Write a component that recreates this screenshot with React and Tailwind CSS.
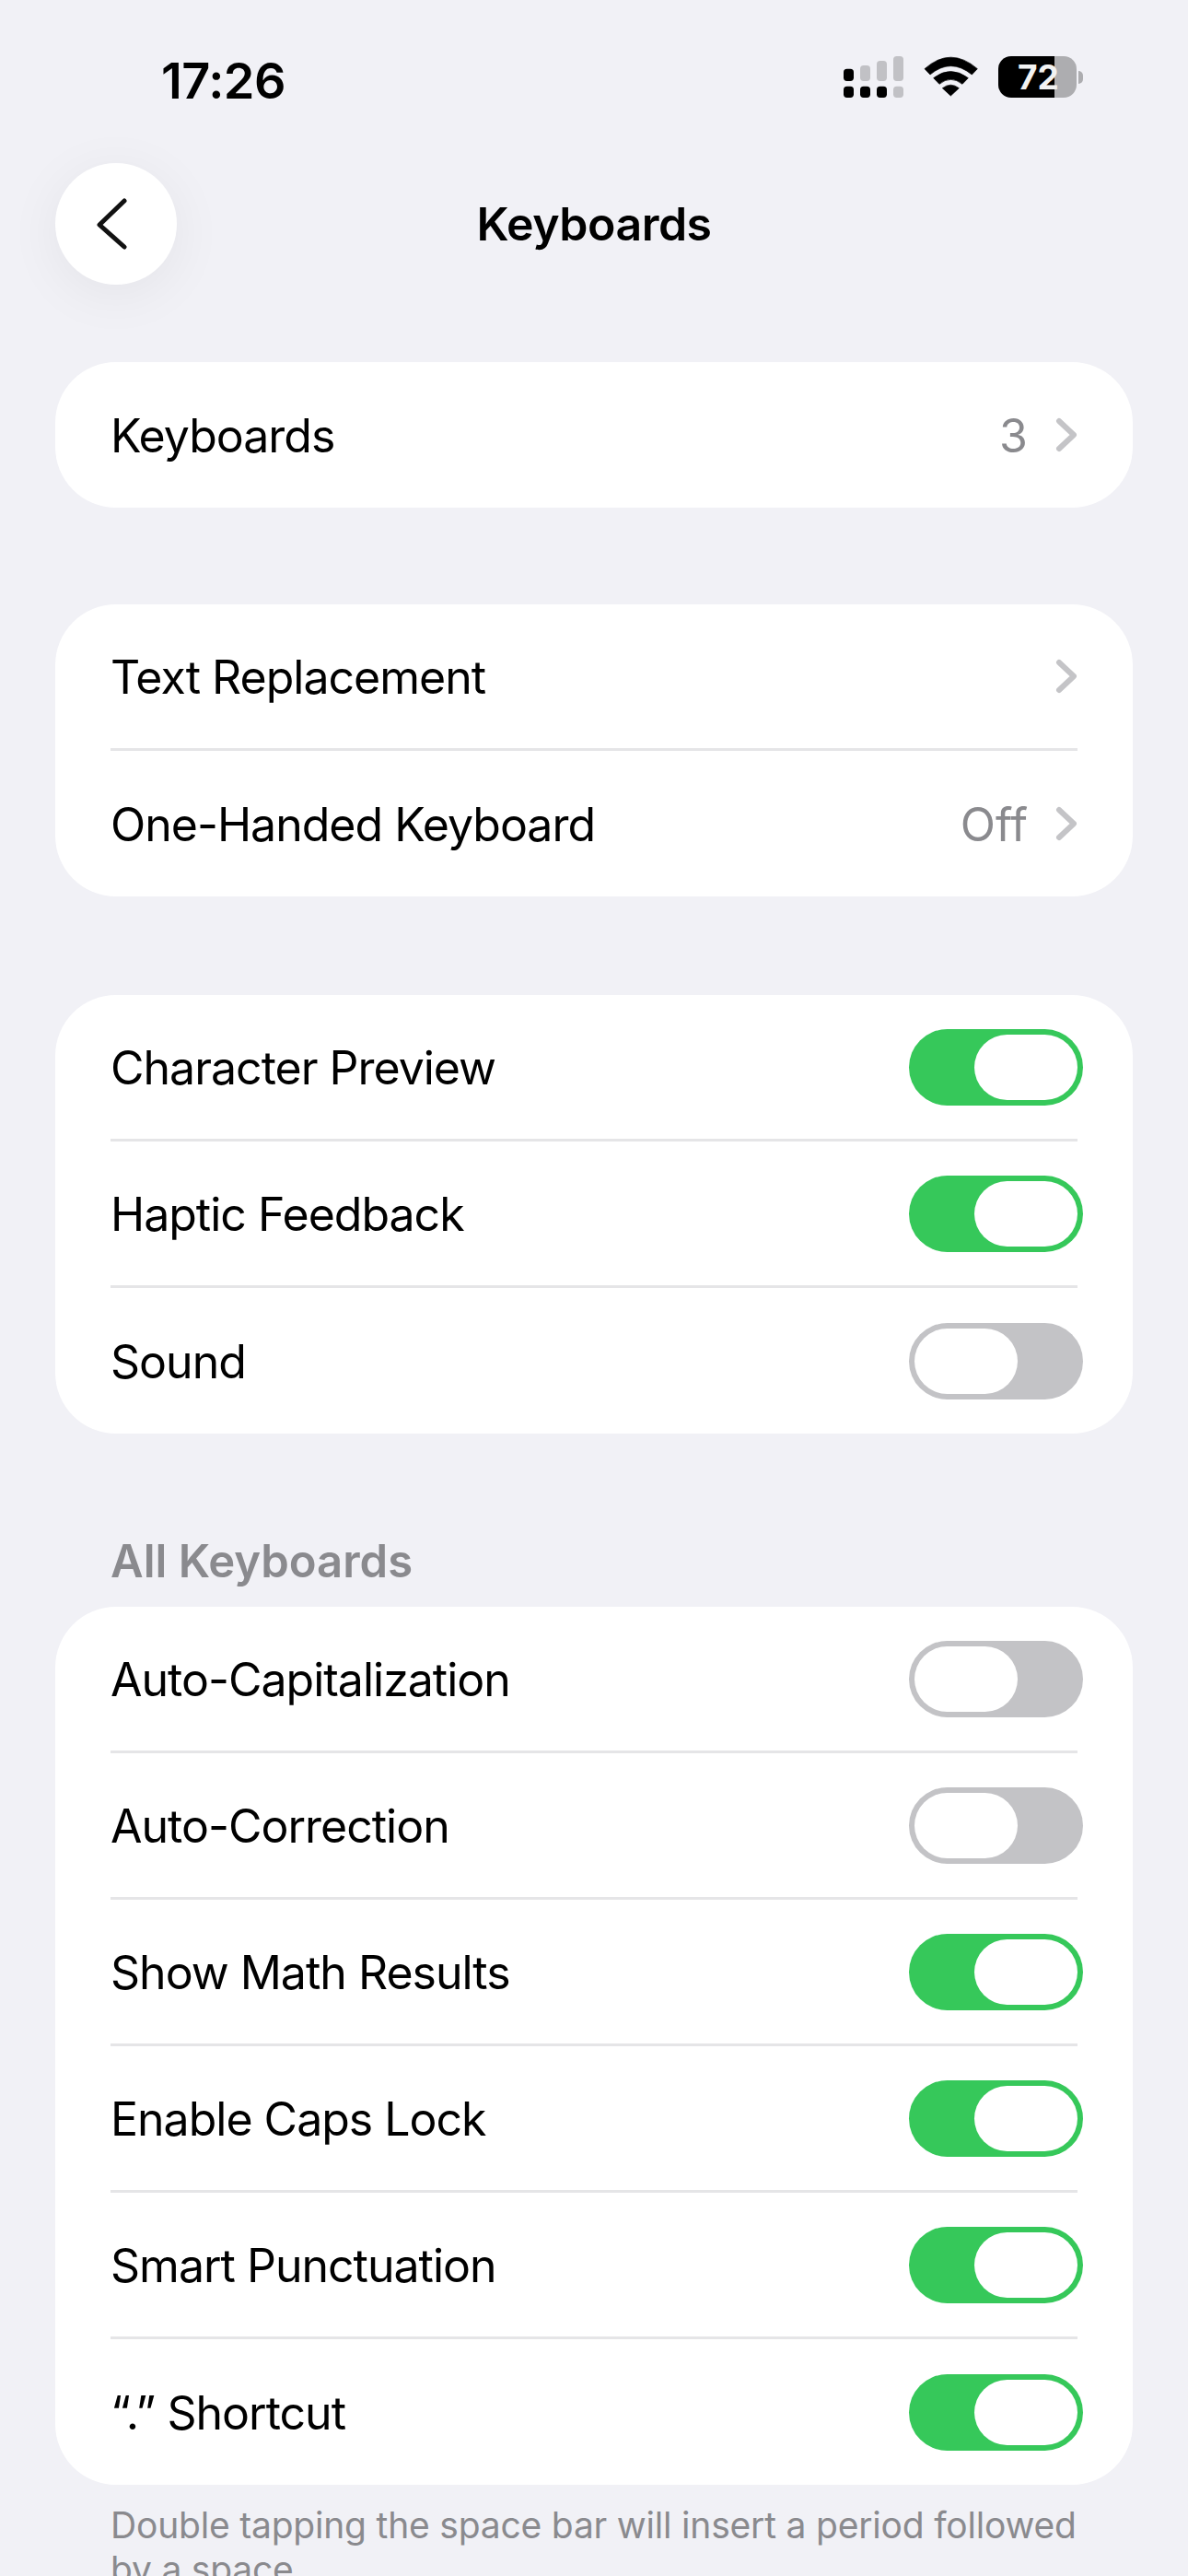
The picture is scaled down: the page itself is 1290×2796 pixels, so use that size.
import React from 'react';

const StatusIcons = () => (
  <svg viewBox="0 0 1020 300" width="340" height="100" className="block">
    {/* signal */}
    <rect x="168" y="113" width="33" height="40" rx="11" fill="#000" />
    <rect x="222" y="102" width="33" height="51" rx="11" fill="#c1c1c5" />
    <rect x="276" y="87" width="33" height="66" rx="11" fill="#c1c1c5" />
    <rect x="330" y="72" width="33" height="81" rx="11" fill="#c1c1c5" />
    <rect x="168" y="170" width="33" height="37" rx="11" fill="#000" />
    <rect x="222" y="170" width="33" height="37" rx="11" fill="#000" />
    <rect x="276" y="170" width="33" height="37" rx="11" fill="#000" />
    <rect x="330" y="170" width="33" height="37" rx="11" fill="#c1c1c5" />
    {/* wifi */}
    <path d="M432 113 Q517 38 604 113 L586 132 Q517 76 450 132 Z" fill="#000" stroke="#000" strokeWidth="2" strokeLinejoin="round" />
    <path d="M461 143 Q517 100 574 143 L555 163 Q517 133 480 163 Z" fill="#000" stroke="#000" strokeWidth="2" strokeLinejoin="round" />
    <path d="M490 176 Q517 155 544 176 L517 201 Z" fill="#000" stroke="#000" strokeWidth="2" strokeLinejoin="round" />
  </svg>
);

const Chevron = () => (
  <svg viewBox="0 0 24 38" width="24" height="38" className="block shrink-0">
    <path d="M4 4 L20 19 L4 34" fill="none" stroke="#c4c4c7" strokeWidth="6" strokeLinecap="round" strokeLinejoin="round" />
  </svg>
);

const Toggle = ({ on }) => (
  <div className={`-mr-[6px] flex h-[83px] w-[189px] shrink-0 items-center rounded-full px-[6px] ${on ? 'justify-end bg-[#36c85a]' : 'justify-start bg-[#c3c3c6]'}`}>
    <div className="h-[71px] w-[112px] rounded-full bg-white" />
  </div>
);

const Row = ({ label, value, chevron, toggle, last }) => (
  <div className={`flex items-center justify-between ${last ? 'h-[158px]' : 'h-[159px] border-b-[3px] border-[#e5e5e7]'}`}>
    <span className="pt-[2px] text-[50px] tracking-[-1px] text-black">{label}</span>
    <div className="flex items-center">
      {value && <span className="mr-[30px] pt-[2px] text-[50px] text-[#8a8a8e]">{value}</span>}
      {chevron && <Chevron />}
      {toggle !== undefined && <Toggle on={toggle} />}
    </div>
  </div>
);

const Card = ({ rows, className = '' }) => (
  <div className={`mx-[60px] rounded-[66px] bg-white px-[60px] ${className}`}>
    {rows.map((row, i) => (
      <Row key={row.label} {...row} last={i === rows.length - 1} />
    ))}
  </div>
);

export default function App() {
  return (
    <div className="h-[2796px] w-[1290px] overflow-hidden bg-[#f1f1f6] font-['Inter',sans-serif]">
      {/* status bar */}
      <div className="flex h-[177px] items-center justify-between pb-[3px] pl-[175px] pr-[90px]">
        <span className="text-[54px] font-semibold tracking-[-0.5px] text-black">17:26</span>
        <div className="relative flex items-center">
          <StatusIcons />
          <div className="absolute left-[224px] top-[24px] flex items-center">
            <div className="flex h-[45px] w-[85px] items-center justify-center rounded-[14px] bg-[linear-gradient(90deg,#000_71.5%,#adadb0_71.5%)] pl-[2px] text-[37px] font-bold leading-none text-[#f2f2f2]">
              72
            </div>
            <div className="ml-[2px] h-[14px] w-[5px] rounded-r-full bg-[#adadb0]" />
          </div>
        </div>
      </div>

      {/* nav */}
      <div className="mb-[84px] grid h-[132px] grid-cols-[132px_1fr_132px] items-center px-[60px]">
        <div className="flex h-[132px] w-[132px] items-center justify-center rounded-full bg-white shadow-[0_10px_60px_rgba(0,0,0,0.06)]">
          <svg viewBox="0 0 132 132" width="132" height="132">
            <path d="M75 41 L48 67 L75 91" fill="none" stroke="#111" strokeWidth="5" strokeLinecap="round" strokeLinejoin="round" />
          </svg>
        </div>
        <div className="text-center text-[50px] font-semibold tracking-[-0.5px] text-black">Keyboards</div>
      </div>

      <Card rows={[{ label: 'Keyboards', value: '3', chevron: true }]} className="mb-[105px]" />
      <Card
        rows={[
          { label: 'Text Replacement', chevron: true },
          { label: 'One-Handed Keyboard', value: 'Off', chevron: true },
        ]}
        className="mb-[107px]"
      />
      <Card
        rows={[
          { label: 'Character Preview', toggle: true },
          { label: 'Haptic Feedback', toggle: true },
          { label: 'Sound', toggle: false },
        ]}
      />

      <div className="mb-[20px] mt-[110px] px-[120px] text-[49px] font-semibold leading-[58px] text-[#8a8a8e]">All Keyboards</div>
      <Card
        rows={[
          { label: 'Auto-Capitalization', toggle: false },
          { label: 'Auto-Correction', toggle: false },
          { label: 'Show Math Results', toggle: true },
          { label: 'Enable Caps Lock', toggle: true },
          { label: 'Smart Punctuation', toggle: true },
          { label: '“.” Shortcut', toggle: true },
        ]}
      />
      <p className="mt-[20px] pl-[120px] pr-[100px] text-[39px] leading-[48px] tracking-[-0.2px] text-[#8a8a8e]">
        Double tapping the space bar will insert a period followed by a space
      </p>
    </div>
  );
}
